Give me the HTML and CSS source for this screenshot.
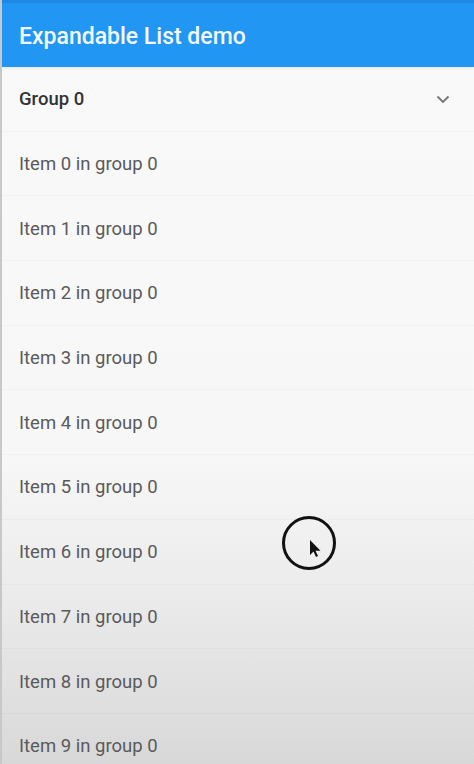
FILE: index.html
```html
<!DOCTYPE html>
<html lang="en">
<head>
    <meta charset="UTF-8">
    <meta name="viewport" content="width=device-width, initial-scale=1.0">
    <title>Expandable List demo</title>
    <link rel="stylesheet" href="styles.css">
</head>
<body>

    <div class="screen">
        <header class="app-bar">
            <h1>Expandable List demo</h1>
        </header>

        <div class="list">
            <!-- group header -->
            <div class="group">
                <span>Group 0</span>
                <svg class="chevron" width="14" height="9" viewBox="0 0 14 9">
                    <path d="M1.5 1.5 L7 7 L12.5 1.5" fill="none" stroke="#757575" stroke-width="1.8"/>
                </svg>
            </div>

            <div class="item">Item 0 in group 0</div>
            <div class="item">Item 1 in group 0</div>
            <div class="item">Item 2 in group 0</div>
            <div class="item">Item 3 in group 0</div>
            <div class="item">Item 4 in group 0</div>
            <div class="item">Item 5 in group 0</div>
            <div class="item">Item 6 in group 0</div>
            <div class="item">Item 7 in group 0</div>
            <div class="item">Item 8 in group 0</div>
            <div class="item">Item 9 in group 0</div>
        </div>

        <!-- touch pointer -->
        <div class="pointer">
            <svg width="14" height="20" viewBox="0 0 14 20">
                <path d="M1 1 L1 16 L4.5 12.5 L7 18 L9 17 L6.5 11.8 L11.5 11.8 Z" fill="#111"/>
            </svg>
        </div>
    </div>

</body>
</html>
```

FILE: styles.css
```css
/* page */
html, body {
    margin: 0;
    padding: 0;
}
body {
    font-family: Roboto, "Noto Sans", Arial, sans-serif;
    background: #c8c8c8;
}
.screen {
    position: relative;
    width: 472px;
    height: 764px;
    margin-left: 2px;
    overflow: hidden;
    background: linear-gradient(to bottom, #f9f9f9 0%, #f7f7f7 60%, #ebebeb 78%, #d8d8d8 100%);
}

/* app bar */
.app-bar {
    height: 67px;
    box-sizing: border-box;
    background: #2196f3;
    border-top: 3px solid #1e88e5;
    display: flex;
    align-items: center;
    padding-left: 17px;
    box-shadow: 0 1px 3px rgba(0, 0, 0, 0.08);
}
.app-bar h1 {
    margin: 0;
    margin-top: 2px;
    color: #f4f9ff;
    font-size: 23px;
    font-weight: 500;
}

/* list */
.group, .item {
    height: 64.7px;
    box-sizing: border-box;
    display: flex;
    align-items: center;
    padding: 0 17px;
    padding-top: 1px;
    border-bottom: 1px solid rgba(0, 0, 0, 0.022);
}
.group {
    justify-content: space-between;
    font-size: 18.5px;
    font-weight: 500;
    color: #333;
}
.chevron {
    margin-right: 7px;
}
.item {
    font-size: 18.5px;
    color: #5a5a5a;
}

.pointer {
    position: absolute;
    left: 280px;
    top: 516px;
    width: 48px;
    height: 48px;
    border: 3px solid #111;
    border-radius: 50%;
}
.pointer svg {
    position: absolute;
    left: 24px;
    top: 20px;
}
```
